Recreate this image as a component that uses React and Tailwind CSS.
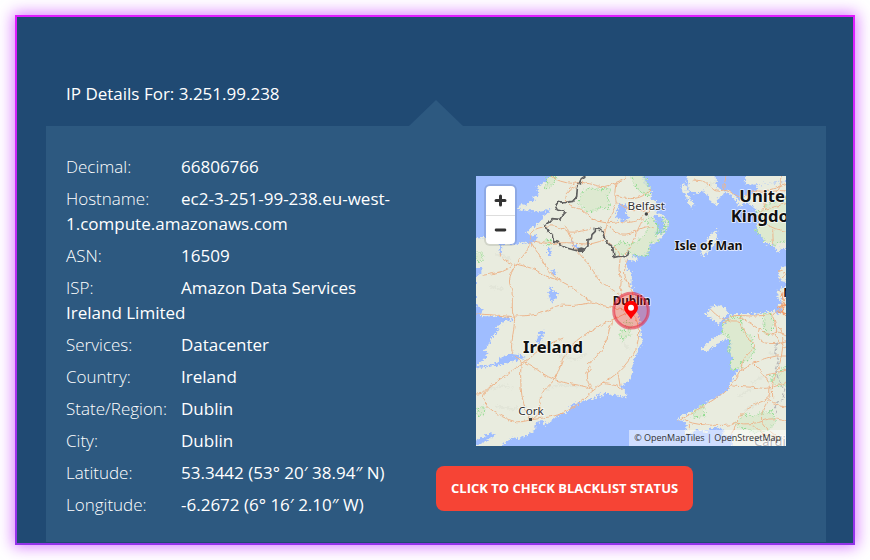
import React from 'react';

const details = [
  { label: 'Decimal:', value: '66806766' },
  { label: 'Hostname:', value: 'ec2-3-251-99-238.eu-west-1.compute.amazonaws.com' },
  { label: 'ASN:', value: '16509' },
  { label: 'ISP:', value: 'Amazon Data Services Ireland Limited' },
  { label: 'Services:', value: 'Datacenter' },
  { label: 'Country:', value: 'Ireland' },
  { label: 'State/Region:', value: 'Dublin' },
  { label: 'City:', value: 'Dublin' },
  { label: 'Latitude:', value: '53.3442 (53° 20′ 38.94″ N)' },
  { label: 'Longitude:', value: '-6.2672 (6° 16′ 2.10″ W)' },
];

const land = [
  // Ireland
  'M222 0L210 14L198 24L184 34L176 30L190 42L182 50L192 58L172 62L180 74L160 76L150 88L136 84L122 94L140 104L168 102L186 108L200 106L224 98L214 112L202 122L196 134L180 148L160 160L150 170L162 178L186 180L178 196L160 202L140 198L118 206L84 204L70 210L68 200L30 184L-20 184V276L16 276V294L0 300V388L20 400L12 420L100 424L112 432L84 436L56 458L70 458L50 482L36 508L24 524L40 532L22 552L0 566V574L60 562L74 546L98 534L128 536L146 546L120 552L80 566L40 572L-20 580V800L30 780L44 772L60 776L40 790L6 806L0 830H60L90 798L112 784L130 788L150 780L176 764L180 740L200 732L206 748L226 734L246 718L280 706L284 688L330 672L362 666L368 650L376 668L384 650L452 664L450 650L432 630L452 622L468 594L470 560L488 520L500 494L494 476L492 430L478 400L468 380L478 362L466 330L468 294L450 270L454 248L480 256L486 248L466 236L490 240L514 234L524 206L552 192L562 180L564 170L544 176L534 170L546 158L540 138L534 116L544 118L562 128L568 152L564 166L574 160L578 146L572 128L556 114L542 112L534 92L542 76L524 66L528 48L504 20L494 -20H236Z',
  // Scotland and the north west of England
  'M640 -20L632 14L640 34L636 44L664 54L684 44L698 62L706 80L724 90L722 68L738 62L748 42L764 46L790 74L800 60L830 56L846 40L838 30L860 24L950 16V220L912 218L906 230L892 208L864 200L858 180L838 164L850 130L840 100L808 76L790 92L770 60L748 44L728 40L720 20L718 -20Z',
  'M640 -20H812L806 20L830 26L880 22L950 12V-20Z',
  'M618 22L634 30L636 56L652 84L650 98L640 86L626 50L616 46Z',
  // Isle of Man
  'M724 160L722 196L706 216L684 238L672 234L684 212L702 176Z',
  // Wales
  'M950 268L914 272L906 296L914 316L950 320Z',
  'M950 330L906 340L904 360L918 378L906 390L920 400L910 414L890 404L862 410L830 414L770 414L752 432L738 448L738 470L700 496L674 522L696 526L728 500L760 486L768 506L758 530L770 546L760 570L770 584L794 576L778 594L764 620L760 636L724 664L684 684L650 706L620 716L602 732L626 736L632 760L622 770L644 776L660 760L690 768L700 760L726 752L746 766L736 780L770 776L764 830H950Z',
  'M704 392L730 388L752 398L758 414L738 430L728 446L704 426L682 412L698 410Z',
];

const lakes = [
  'M432 82L454 90L448 110L464 126L444 136L424 132L420 112Z',
  'M72 204L80 204L76 238L70 230Z',
  'M216 214L228 222L224 242L216 236Z',
  'M222 330L232 348L250 352L242 364L228 380L218 360Z',
  'M190 466L206 464L200 484L190 500L176 496L184 490Z',
  'M228 282L240 288L236 296L226 292Z',
  'M284 190L294 200L304 212L316 224L306 224L290 208Z',
];

const parks = [
  'M318 48L344 36L372 42L400 36L404 50L392 60L402 82L400 98L376 94L350 106L330 108L324 96L308 82Z',
  'M462 -10L500 -10L524 40L516 60L492 46L474 26Z',
  'M416 210L436 196L460 206L484 196L506 176L520 152L512 132L524 120L540 138L550 168L534 180L550 194L522 200L518 236L492 242L456 230L432 238L414 226Z',
  'M562 124L574 130L576 152L564 168L550 174L566 152Z',
  'M434 466L462 460L464 476L444 490L430 482Z',
  'M448 436L468 440L464 454L448 452Z',
  'M0 232L18 230L18 256L0 256Z',
  'M208 4L242 0L236 18L216 38L204 36L216 18Z',
  'M206 192L226 190L226 206L212 206Z',
  'M4 696L24 692L26 714L8 720Z',
  'M838 110L870 100L870 84L940 66V200L912 198L896 206L868 196L858 180L838 164L856 140Z',
  'M740 446L764 424L796 424L800 466L830 482L826 510L838 520L820 550L792 560L798 572L770 584L760 570L770 546L758 530L762 484L740 474Z',
  'M862 410L886 416L894 438L880 480L866 474Z',
  'M884 600L908 594L928 566L940 624L908 632L886 616Z',
  'M780 740L806 714L836 720L862 710L890 706L898 740L880 762L838 770L816 758L790 756Z',
  'M650 712L682 686L686 722L652 726Z',
];

const roads = [
  'M318 10L300 36L276 44L262 66L282 90L318 98L344 128L392 144L432 134L460 142L502 128L526 96',
  'M276 44L290 22L320 18L360 28L384 34L420 20L450 6',
  'M420 20L414 56L424 78L410 106L392 144L382 190',
  'M420 60L452 70L502 64L524 40',
  'M424 78L446 100L500 108L526 96',
  'M502 128L482 166L470 200L454 226L440 238',
  'M392 144L420 172L450 176L482 166L508 150L530 152',
  'M344 158L290 176L250 152L218 148L160 164L164 190L182 198L226 204L270 198L330 206L372 198L390 188',
  'M270 150L286 182L290 212L322 246L356 290L370 316L398 332L430 356',
  'M160 200L160 220L118 264L96 314L110 344L108 412L118 424L110 480L104 530L136 556L162 566L234 616L342 632L350 644',
  'M20 298L84 288L118 264L74 252L72 230',
  'M118 264L174 276L204 300L256 314L296 340L344 380L412 396L464 406',
  'M118 424L92 418L0 414',
  'M118 420L174 420L232 396L250 386L300 390L344 380',
  'M256 314L230 300L214 280L180 222L164 198',
  'M464 406L410 430L350 460L290 500L262 540L240 612L190 652L192 724L162 732',
  'M162 732L132 740L98 732L52 708L24 680L20 654L60 618L106 584L138 566L170 540L196 512L262 486',
  'M136 556L132 592L138 680L160 732',
  'M0 654L20 654L34 634L60 618',
  'M162 732L216 724L252 716L302 690L350 644L380 622L426 592L462 550L484 516L490 460L478 420L464 406',
  'M350 644L332 620L336 564L352 582L330 592',
  'M336 564L364 544L396 490L402 440L420 422',
  'M380 622L430 628L440 638',
  'M426 592L432 628',
  'M464 406L430 356L438 320L426 280L436 238L414 210L384 190',
  'M464 406L476 370L462 332L448 310L444 280L452 248',
  'M224 0L250 20L290 22',
  'M650 12L690 12L716 50L750 38L800 72L826 40L866 50L940 22',
  'M750 0L742 40',
  'M940 80L870 100L846 104L858 130L890 160L940 168',
  'M870 100L860 60L900 40L940 46',
  'M890 160L892 208',
  'M914 0L920 40L890 60',
  'M700 396L740 440L770 416L830 422L906 414L926 384',
  'M740 440L792 424L806 480L846 510L802 540L796 584L766 630L720 668L650 710L606 736',
  'M792 424L850 456L880 480L906 462L940 482',
  'M850 456L838 496L900 506L940 496',
  'M796 584L830 560L900 536L940 540',
  'M830 560L870 598L884 640L878 670L830 686L798 712L782 742L746 750L640 744L626 730',
  'M766 630L840 634L884 640L940 614',
  'M870 598L940 580',
  'M878 670L914 700L940 690',
  'M640 744L640 764',
  'M782 742L768 780L740 800',
  'M782 742L830 748L892 720L940 740',
  'M830 748L860 786L940 790',
  'M878 670L852 712L862 752L900 780',
  'M906 280L940 300',
  'M910 310L940 284',
  'M906 344L940 370',
  'M912 362L940 340',
  'M904 392L940 384',
  'M912 402L940 430',
  'M886 414L906 450L896 500L940 520',
  'M906 450L924 460L916 560L886 620L890 664',
];

const motorways = [
  'M904 396L922 384L940 388',
  'M906 408L940 414',
  'M916 376L926 420',
  'M922 348L914 380L940 402',
];

const border =
  'M328 0L316 8L304 36L302 62L290 76L266 80L248 76L238 90L244 102L270 108L256 122L252 130L228 128L220 138L204 148L218 168L232 178L234 196L246 198L250 206L272 216L294 222L312 226L326 220L336 210L336 192L346 188L348 176L358 166L358 156L374 158L382 172L386 190L400 206L410 210L414 244L434 240L446 242L456 236L458 226';

// Rounds the corners of an "Mx yLx y..." line by curving through the midpoints.
function smooth(d) {
  const pts = d.slice(1).split('L').map((p) => p.split(' ').map(Number));
  if (pts.length < 3) return d;
  let out = `M${pts[0].join(' ')}`;
  for (let i = 1; i < pts.length - 1; i++) {
    const [x, y] = pts[i];
    const [nx, ny] = pts[i + 1];
    const end = i === pts.length - 2 ? [nx, ny] : [(x + nx) / 2, (y + ny) / 2];
    out += `Q${x} ${y} ${end.join(' ')}`;
  }
  return out;
}

function MapLabel({ x, y, size, bold, anchor = 'middle', fill, children }) {
  return (
    <text
      x={x}
      y={y}
      fontSize={size}
      fontWeight={bold ? 700 : 400}
      textAnchor={anchor}
      fill={fill || (bold ? '#111111' : '#333333')}
      stroke="#ffffff"
      strokeOpacity="0.8"
      strokeWidth="5"
      strokeLinejoin="round"
      paintOrder="stroke"
    >
      {children}
    </text>
  );
}

function MapDrawing() {
  return (
    <svg
      viewBox="0 0 930 810"
      preserveAspectRatio="xMidYMid slice"
      className="block h-full w-full font-['Noto_Sans',sans-serif]"
      role="img"
      aria-label="Map of Ireland with a pin on Dublin"
    >
      <defs>
        {/* roughens coastlines and roads */}
        <filter id="rough" filterUnits="userSpaceOnUse" x="-20" y="-20" width="970" height="850" colorInterpolationFilters="sRGB">
          <feTurbulence type="fractalNoise" baseFrequency="0.15" numOctaves="2" seed="4" />
          <feDisplacementMap in="SourceGraphic" scale="20" xChannelSelector="R" yChannelSelector="G" />
        </filter>
        <filter id="wavy" filterUnits="userSpaceOnUse" x="-20" y="-20" width="970" height="850" colorInterpolationFilters="sRGB">
          <feTurbulence type="fractalNoise" baseFrequency="0.07" numOctaves="2" seed="9" />
          <feDisplacementMap in="SourceGraphic" scale="12" xChannelSelector="R" yChannelSelector="G" />
        </filter>
      </defs>

      <rect width="930" height="810" fill="#9fbdff" />
      <g filter="url(#rough)">
        {land.map((d) => (
          <path key={d} d={d} fill="#e9ecdf" />
        ))}
        {/* soft hill shading */}
        <g fill="none" stroke="#dde0d3" strokeWidth="7" strokeLinecap="round" opacity="0.5">
          <path d="M40 640l40 -12l30 6M210 640l40 -14l60 6M60 690l50 10l40 -8M250 540l50 10l30 -16M40 330l40 10M60 236l40 10" />
          <path d="M790 660l40 -24M830 620l30 -20M810 700l30 -16M880 530l20 10M440 500l20 20M690 30l24 -10M860 440l10 20" />
        </g>
        {parks.map((d) => (
          <path key={d} d={d} fill="#d8e8cb" fillOpacity="0.75" stroke="#8fdc8f" strokeWidth="3" strokeDasharray="6 4" />
        ))}
        {lakes.map((d) => (
          <path key={d} d={d} fill="#9fbdff" />
        ))}
      </g>
      <g filter="url(#wavy)" fill="none" strokeLinejoin="round">
        <g stroke="#ecb58c" strokeWidth="3">
          {roads.map((d) => (
            <path key={d} d={smooth(d)} />
          ))}
        </g>
        <g stroke="#f0a070" strokeWidth="4">
          {motorways.map((d) => (
            <path key={d} d={smooth(d)} />
          ))}
        </g>
        <path d="M902 500L896 530L908 552L898 580L910 620L926 640L920 670L898 690L900 716" stroke="#b9b9b9" strokeWidth="4" strokeDasharray="10 5" />
        <path d={border} stroke="#5f5f5f" strokeWidth="5" />
        <path d="M302 218l14 -4l14 4l-4 10l-14 0z" fill="#5f5f5f" />
      </g>

      <circle cx="511" cy="114" r="5" fill="#444444" />
      <rect x="159" y="726" width="9" height="9" fill="#444444" />

      <MapLabel x={511} y={102} size={35}>Belfast</MapLabel>
      <MapLabel x={165} y={718} size={35}>Cork</MapLabel>
      <MapLabel x={698} y={223} size={37} bold>Isle of Man</MapLabel>
      <MapLabel x={231} y={532} size={50} bold>Ireland</MapLabel>
      <MapLabel x={790} y={77} size={50} bold anchor="start">United</MapLabel>
      <MapLabel x={764} y={138} size={50} bold anchor="start">Kingdom</MapLabel>
      <MapLabel x={467} y={387} size={35} bold>Dublin</MapLabel>
      <MapLabel x={922} y={362} size={36} bold anchor="start">M</MapLabel>
      <MapLabel x={834} y={810} size={39} anchor="start" fill="#777777">Cardiff</MapLabel>

      {/* location pin with its accuracy ring */}
      <circle cx="465" cy="404" r="52" fill="#ff0000" fillOpacity="0.25" stroke="#e8203a" strokeOpacity="0.55" strokeWidth="9" />
      <path d="M465 430C458 416 444 408 444 395A21 21 0 0 1 486 395C486 408 472 416 465 430Z" fill="#ff0000" />
      <circle cx="465" cy="395" r="9" fill="#ffffff" />
    </svg>
  );
}

function LocationMap() {
  return (
    <div className="relative h-[270px] w-full overflow-hidden">
      <MapDrawing />
      <div className="absolute top-[10px] left-[10px] flex flex-col overflow-hidden rounded bg-white shadow-[0_0_0_2px_rgba(0,0,0,0.1)]">
        <button type="button" aria-label="Zoom in" className="flex size-[29px] items-center justify-center">
          <svg viewBox="0 0 29 29" className="size-full" fill="none" stroke="#333333" strokeWidth="3" strokeLinecap="round">
            <path d="M10 14.500H19M14.500 10V19" />
          </svg>
        </button>
        <button type="button" aria-label="Zoom out" className="flex size-[29px] items-center justify-center border-t border-[#dddddd]">
          <svg viewBox="0 0 29 29" className="size-full" fill="none" stroke="#333333" strokeWidth="3" strokeLinecap="round">
            <path d="M10 14.500H19" />
          </svg>
        </button>
      </div>
      <div className="absolute right-0 bottom-0 bg-white/50 px-[5px] text-[9px] leading-4 text-[#333333]">
        <a href="#openmaptiles">© OpenMapTiles</a>
        {' | '}
        <a href="#openstreetmap">OpenStreetMap</a>
      </div>
    </div>
  );
}

export default function App() {
  return (
    <main className="bg-white p-[15px] font-['Open_Sans',sans-serif]">
      <div className="bg-linear-to-b from-[#e01cff] to-[#9333ea] p-[2px] shadow-[0_0_14px_2px_rgba(192,38,255,0.6)]">
        <section className="bg-[#204a73] pt-16 pr-[27px] pb-px pl-[29px] text-[17px] leading-[25px] text-white">
          <h1 className="mb-5 px-5">IP Details For: 3.251.99.238</h1>

          <div className="relative grid grid-cols-2 bg-[#2d5980]">
            <span className="absolute bottom-full left-1/2 h-[26px] w-[54px] -translate-x-1/2 bg-[#2d5980] [clip-path:polygon(50%_0,100%_100%,0_100%)]" />

            <dl className="flex flex-col gap-[7px] pt-7 pr-8 pb-[25px] pl-5">
              {details.map((item) => (
                <div key={item.label}>
                  <dt className="inline-block w-[115px] font-light">{item.label}</dt>
                  <dd className="inline">{item.value}</dd>
                </div>
              ))}
            </dl>

            <div className="flex flex-col items-start gap-5 pt-[50px]">
              <div className="w-full px-10">
                <LocationMap />
              </div>
              <button type="button" className="rounded-lg bg-[#f64435] px-[15px] py-[10px] text-[13px] font-bold">
                CLICK TO CHECK BLACKLIST STATUS
              </button>
            </div>
          </div>
        </section>
      </div>
    </main>
  );
}
